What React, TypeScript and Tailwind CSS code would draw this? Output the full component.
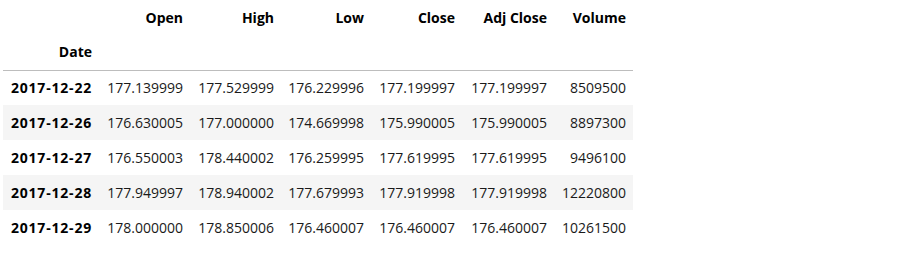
import React from "react";

const cols = ["Open", "High", "Low", "Close", "Adj Close", "Volume"];
const widths = ["w-[91px]", "w-[91px]", "w-[90px]", "w-[91px]", "w-[92px]", "w-[79px]"];
const rows: [string, string[]][] = [
  ["2017-12-22", ["177.139999", "177.529999", "176.229996", "177.199997", "177.199997", "8509500"]],
  ["2017-12-26", ["176.630005", "177.000000", "174.669998", "175.990005", "175.990005", "8897300"]],
  ["2017-12-27", ["176.550003", "178.440002", "176.259995", "177.619995", "177.619995", "9496100"]],
  ["2017-12-28", ["177.949997", "178.940002", "177.679993", "177.919998", "177.919998", "12220800"]],
  ["2017-12-29", ["178.000000", "178.850006", "176.460007", "176.460007", "176.460007", "10261500"]],
];

export default function App() {
  return (
    <div
      className="w-[904px] h-[265px] bg-white pl-[3px] text-[#1a1a1a]"
      style={{ fontFamily: '"Open Sans", "Noto Sans", sans-serif' }}
    >
      <table className="border-collapse text-[14px] leading-none table-fixed">
        <thead>
          <tr className="h-[35px]">
            <th className="w-[96px] px-[7px]"></th>
            {cols.map((c, i) => (
              <th key={c} className={`${widths[i]} px-[7px] text-right font-bold text-black`}>
                {c}
              </th>
            ))}
          </tr>
          <tr className="h-[35px] border-b border-[#bdbdbd]">
            <th className="px-[7px] text-right font-bold text-black">Date</th>
            {cols.map((c) => (
              <th key={c} className="px-[7px]"></th>
            ))}
          </tr>
        </thead>
        <tbody>
          {rows.map(([d, vals], ri) => (
            <tr key={d} className={`h-[35px] ${ri % 2 === 1 ? "bg-[#f5f5f5]" : "bg-white"}`}>
              <th className="px-[7px] text-right font-bold text-black tracking-[0.8px]">{d}</th>
              {vals.map((v, i) => (
                <td key={i} className="px-[7px] text-right">
                  {v}
                </td>
              ))}
            </tr>
          ))}
        </tbody>
      </table>
    </div>
  );
}
